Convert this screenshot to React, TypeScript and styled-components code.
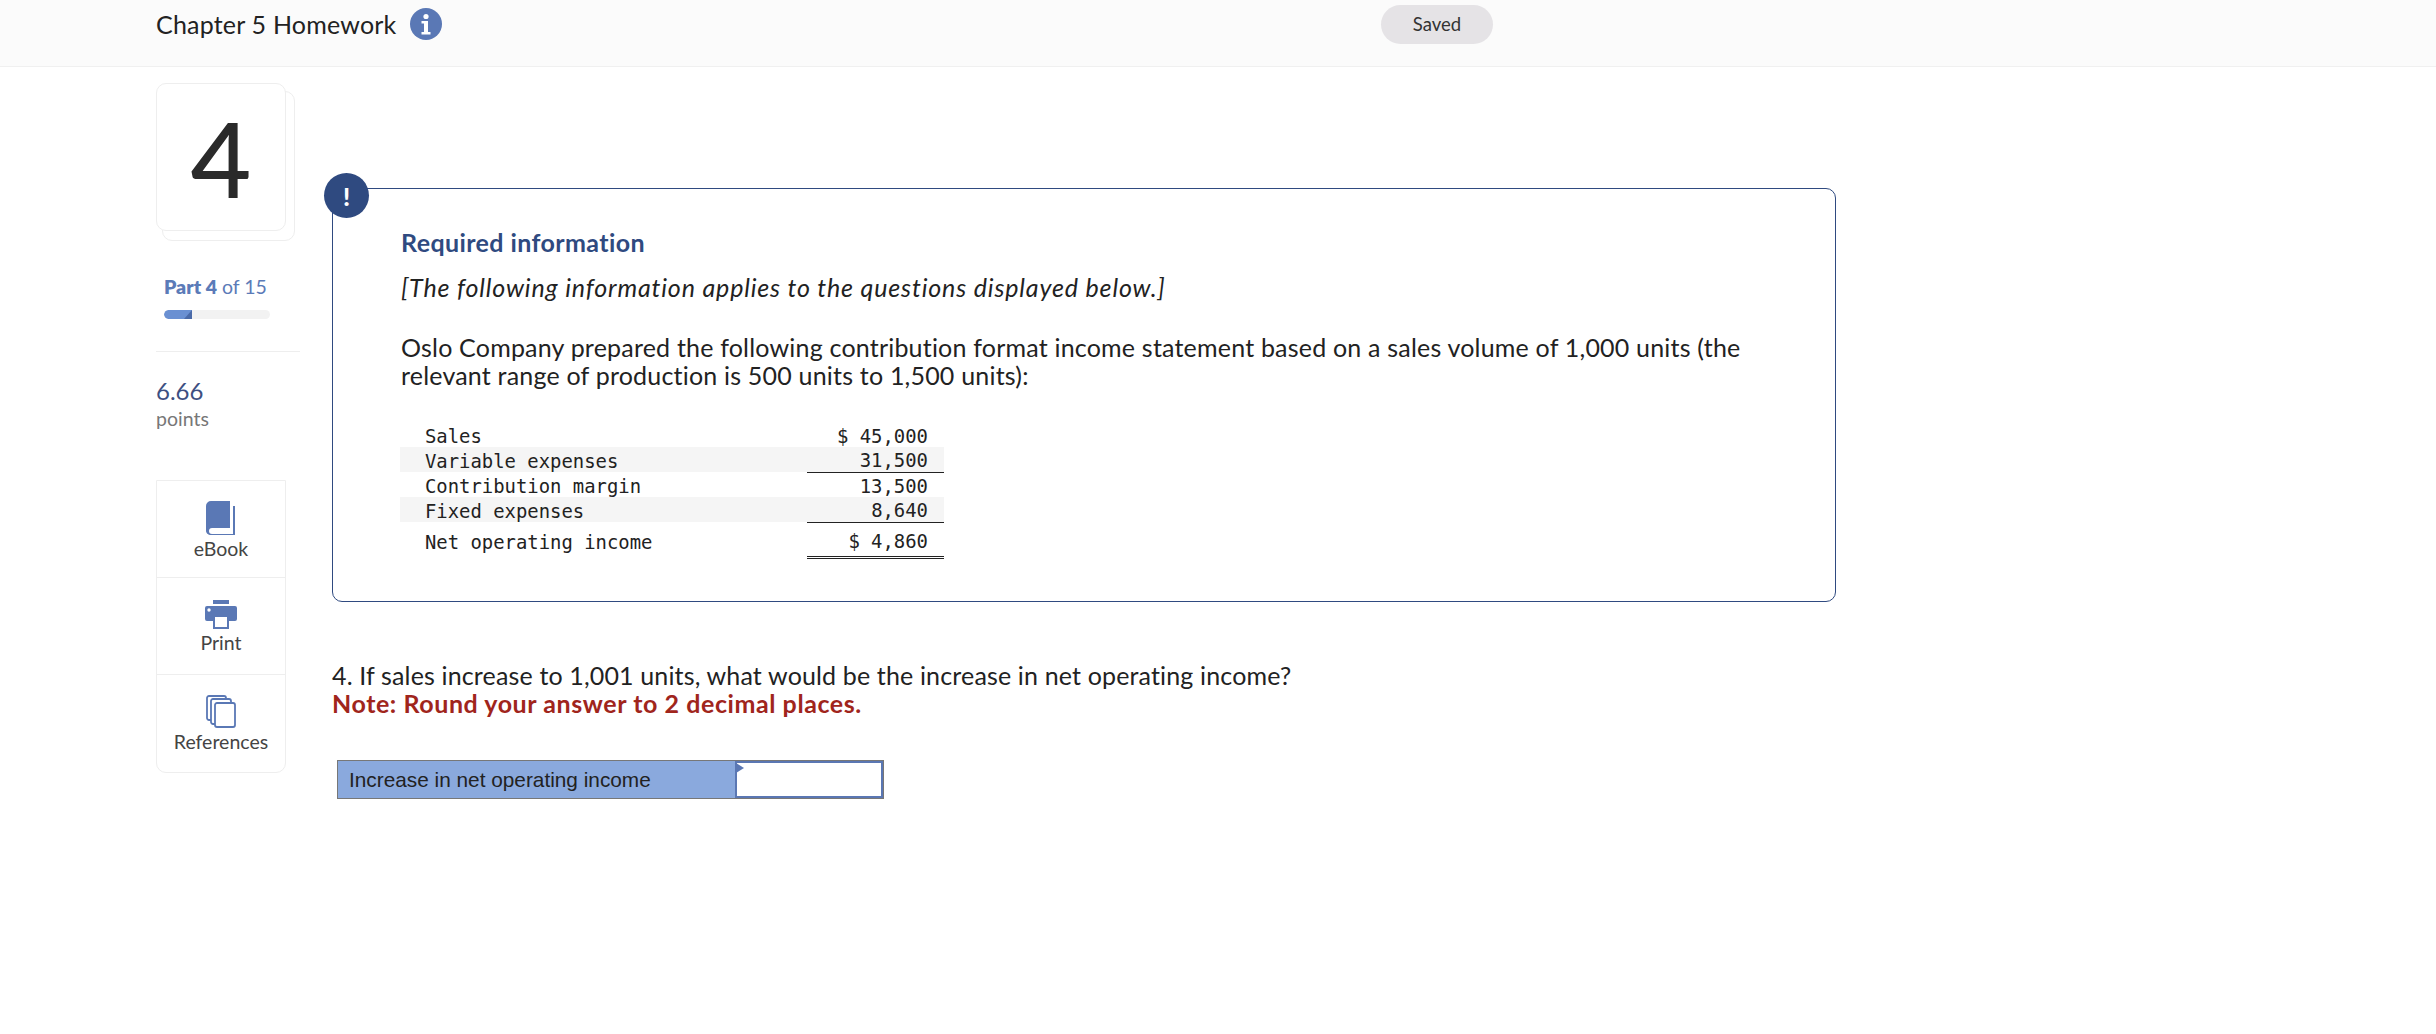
import styled, { createGlobalStyle } from 'styled-components';

const GlobalStyle = createGlobalStyle`
  html, body {
    margin: 0;
    padding: 0;
    font-family: Lato, "Open Sans", Arial, sans-serif;
    color: #222;
  }
  * { box-sizing: border-box; }
`;

const Header = styled.header`
  height: 67px;
  background: #fbfbfb;
  border-bottom: 1px solid #f0f0f0;
  display: flex;
  align-items: flex-start;
  padding-left: 156px;
`;

const HeaderTitle = styled.div`
  width: 1225px;
  height: 47px;
  display: flex;
  align-items: center;
  gap: 14px;
  font-size: 25px;
  letter-spacing: 0.2px;
  color: #222;
`;

const SavedPill = styled.div`
  width: 112px;
  height: 39px;
  margin-top: 5px;
  padding-bottom: 1px;
  border-radius: 20px;
  background: #e5e3e6;
  display: flex;
  align-items: center;
  justify-content: center;
  font-size: 18.5px;
  color: #333;
`;

const Body = styled.div`
  display: flex;
  padding-left: 156px;
`;

const Sidebar = styled.aside`
  width: 176px;
  padding-top: 16px;
`;

const NumberCard = styled.div`
  position: relative;
  width: 130px;
  height: 148px;
  background: #fff;
  border: 1px solid #eee;
  border-radius: 10px;
  display: flex;
  align-items: center;
  justify-content: center;
  font-size: 105px;
  font-weight: 500;
  color: #2a2a2a;
  line-height: 1;
  &::before {
    content: '';
    position: absolute;
    left: 5px;
    top: 7px;
    width: 131px;
    height: 148px;
    border: 1px solid #eee;
    border-radius: 10px;
    z-index: -1;
  }
`;

const PartLabel = styled.div`
  margin: 44px 0 0 8px;
  line-height: 24px;
  font-size: 19.5px;
  color: #5b7bb8;
  b { font-weight: 800; }
`;

const ProgressTrack = styled.div`
  width: 106px;
  height: 9px;
  margin: 11px 0 0 8px;
  border-radius: 5px;
  background: #f2f2f2;
  overflow: hidden;
`;

const ProgressFill = styled.div`
  position: relative;
  height: 100%;
  background: #6a90d2;
  border-radius: 5px 0 0 5px;
  &::after {
    content: '';
    position: absolute;
    right: 0;
    bottom: 0;
    border-style: solid;
    border-width: 0 0 9px 8px;
    border-color: transparent transparent #4a6aa8 transparent;
  }
`;

const Divider = styled.div`
  width: 144px;
  height: 1px;
  margin-top: 32px;
  background: #eee;
`;

const Points = styled.div`
  margin-top: 26px;
  line-height: 26px;
  font-size: 24px;
  color: #3d4f82;
`;

const PointsLabel = styled.div`
  line-height: 28px;
  margin-top: 1px;
  font-size: 19.5px;
  color: #777;
`;

const ToolCard = styled.div`
  width: 130px;
  margin-top: 47px;
  border: 1px solid #eee;
  border-radius: 0 0 10px 10px;
`;

const ToolRow = styled.div<{ $pad: number }>`
  height: 97px;
  padding-top: ${(p) => p.$pad}px;
  display: flex;
  flex-direction: column;
  align-items: center;
  border-bottom: 1px solid #eee;
  font-size: 19.5px;
  color: #444;
  &:last-child { border-bottom: 0; }
  svg { display: block; }
`;

const ToolLabel = styled.span`
  line-height: 24px;
  margin-top: 2px;
`;

const Content = styled.main`
  width: 1504px;
  padding-top: 121px;
`;

const InfoBox = styled.section`
  position: relative;
  height: 414px;
  padding: 39px 0 0 68px;
  border: 1px solid #2f4a80;
  border-radius: 10px;
`;

const AlertBadge = styled.div`
  position: absolute;
  left: -9px;
  top: -16px;
  width: 45px;
  height: 45px;
  border-radius: 50%;
  background: #2f4a80;
  color: #fff;
  display: flex;
  align-items: center;
  justify-content: center;
  font-size: 25px;
  font-weight: 900;
`;

const BoxTitle = styled.h2`
  margin: 0;
  line-height: 28px;
  font-size: 25px;
  letter-spacing: 0.4px;
  font-weight: 700;
  color: #2f4a80;
`;

const BoxNote = styled.p`
  margin: 17px 0 0;
  line-height: 28px;
  font-size: 25px;
  letter-spacing: 0.85px;
  font-style: italic;
  color: #222;
`;

const BoxText = styled.p`
  margin: 32px 0 0;
  width: 1400px;
  line-height: 28px;
  font-size: 25px;
  letter-spacing: 0.2px;
  color: #222;
`;

const Statement = styled.table`
  width: 544px;
  margin: 33px 0 0 -1px;
  border-collapse: collapse;
  font-family: "DejaVu Sans Mono", "Liberation Mono", monospace;
  font-size: 18.9px;
  color: #222;
`;

const StatementRow = styled.tr<{ $shade?: boolean; $tall?: boolean }>`
  height: ${(p) => (p.$tall ? 35 : 25)}px;
  background: ${(p) => (p.$shade ? '#f5f5f5' : 'transparent')};
`;

const LabelCell = styled.td<{ $tall?: boolean }>`
  padding: ${(p) => (p.$tall ? 5 : 2)}px 0 0 25px;
`;

const AmountCell = styled.td<{ $rule?: 'single' | 'double' }>`
  width: 137px;
  padding: ${(p) => (p.$rule === 'double' ? 7 : 2)}px 16px 0 0;
  text-align: right;
  vertical-align: ${(p) => (p.$rule === 'double' ? 'top' : 'middle')};
  border-bottom: ${(p) =>
    p.$rule === 'double' ? '3px double #222' : p.$rule === 'single' ? '1px solid #222' : 'none'};
`;

const Question = styled.p`
  margin: 59px 0 0;
  line-height: 28px;
  font-size: 25px;
  letter-spacing: 0.15px;
  color: #222;
`;

const NoteLine = styled.strong`
  display: block;
  font-weight: 700;
  letter-spacing: 0.57px;
  color: #a0251c;
`;

const AnswerRow = styled.div`
  display: flex;
  width: 547px;
  height: 39px;
  margin: 43px 0 0 5px;
  border: 1px solid #777;
`;

const AnswerLabel = styled.div`
  width: 397px;
  background: #8aa9dd;
  display: flex;
  align-items: center;
  padding-left: 11px;
  font-family: "Liberation Sans", Arial, sans-serif;
  font-size: 20.8px;
  color: #222;
`;

const AnswerInput = styled.div`
  position: relative;
  flex: 1;
  background: #fff;
  border: 2px solid #5a77b3;
  &::before {
    content: '';
    position: absolute;
    left: -1px;
    top: 0;
    border-style: solid;
    border-width: 5px 0 5px 8px;
    border-color: transparent transparent transparent #5a77b3;
  }
`;

const InfoIcon = () => (
  <svg width="32" height="32" viewBox="0 0 32 32">
    <circle cx="16" cy="16" r="16" fill="#5a78b5" />
    <circle cx="16" cy="8.5" r="2.6" fill="#fff" />
    <path d="M11.5 13h6.5v11h2.5v2.5h-9V24h2.5v-8.500h-2.500z" fill="#fff" />
  </svg>
);

const BookIcon = () => (
  <svg width="30" height="34" viewBox="0 0 30 34">
    <path d="M5 0h19v27H6a3 3 0 0 0 0 6h21V5h2v29H5a4.500 4.500 0 0 1-5-5V5a5 5 0 0 1 5-5z" fill="#5a78b5" />
  </svg>
);

const PrintIcon = () => (
  <svg width="32" height="29" viewBox="0 0 32 29">
    <rect x="8" y="0" width="16" height="4" fill="#5a78b5" />
    <path d="M2 6h28a2 2 0 0 1 2 2v11a2 2 0 0 1-2 2h-6v-6H8v6H2a2 2 0 0 1-2-2V8a2 2 0 0 1 2-2z" fill="#5a78b5" />
    <circle cx="4" cy="10" r="1.700" fill="#fff" />
    <rect x="9" y="16" width="14" height="12" fill="#fff" stroke="#5a78b5" strokeWidth="2" />
  </svg>
);

const ReferencesIcon = () => (
  <svg width="30" height="33" viewBox="0 0 30 33" fill="#fff" stroke="#5a78b5" strokeWidth="1.800">
    <rect x="1" y="1" width="19" height="24" rx="2" />
    <rect x="5" y="4" width="20" height="25" rx="2" />
    <rect x="9" y="8" width="20" height="24" rx="2" />
  </svg>
);

const statement = [
  { label: 'Sales', amount: '$ 45,000' },
  { label: 'Variable expenses', amount: '31,500', shade: true, rule: 'single' as const },
  { label: 'Contribution margin', amount: '13,500' },
  { label: 'Fixed expenses', amount: '8,640', shade: true, rule: 'single' as const },
  { label: 'Net operating income', amount: '$ 4,860', rule: 'double' as const, tall: true },
];

export default function App() {
  return (
    <>
      <GlobalStyle />
      <Header>
        <HeaderTitle>
          Chapter 5 Homework
          <InfoIcon />
        </HeaderTitle>
        <SavedPill>Saved</SavedPill>
      </Header>
      <Body>
        <Sidebar>
          <NumberCard>4</NumberCard>
          <PartLabel>
            <b>Part 4</b> of 15
          </PartLabel>
          <ProgressTrack>
            <ProgressFill style={{ width: `${(4 / 15) * 100}%` }} />
          </ProgressTrack>
          <Divider />
          <Points>6.66</Points>
          <PointsLabel>points</PointsLabel>
          <ToolCard>
            <ToolRow $pad={20}>
              <BookIcon />
              <ToolLabel>eBook</ToolLabel>
            </ToolRow>
            <ToolRow $pad={22}>
              <PrintIcon />
              <ToolLabel>Print</ToolLabel>
            </ToolRow>
            <ToolRow $pad={20}>
              <ReferencesIcon />
              <ToolLabel>References</ToolLabel>
            </ToolRow>
          </ToolCard>
        </Sidebar>
        <Content>
          <InfoBox>
            <AlertBadge>!</AlertBadge>
            <BoxTitle>Required information</BoxTitle>
            <BoxNote>[The following information applies to the questions displayed below.]</BoxNote>
            <BoxText>
              Oslo Company prepared the following contribution format income statement based on a sales volume of
              1,000 units (the relevant range of production is 500 units to 1,500 units):
            </BoxText>
            <Statement>
              <tbody>
                {statement.map((row) => (
                  <StatementRow key={row.label} $shade={row.shade} $tall={row.tall}>
                    <LabelCell $tall={row.tall}>{row.label}</LabelCell>
                    <AmountCell $rule={row.rule}>{row.amount}</AmountCell>
                  </StatementRow>
                ))}
              </tbody>
            </Statement>
          </InfoBox>
          <Question>
            4. If sales increase to 1,001 units, what would be the increase in net operating income?
            <NoteLine>Note: Round your answer to 2 decimal places.</NoteLine>
          </Question>
          <AnswerRow>
            <AnswerLabel>Increase in net operating income</AnswerLabel>
            <AnswerInput />
          </AnswerRow>
        </Content>
      </Body>
    </>
  );
}
